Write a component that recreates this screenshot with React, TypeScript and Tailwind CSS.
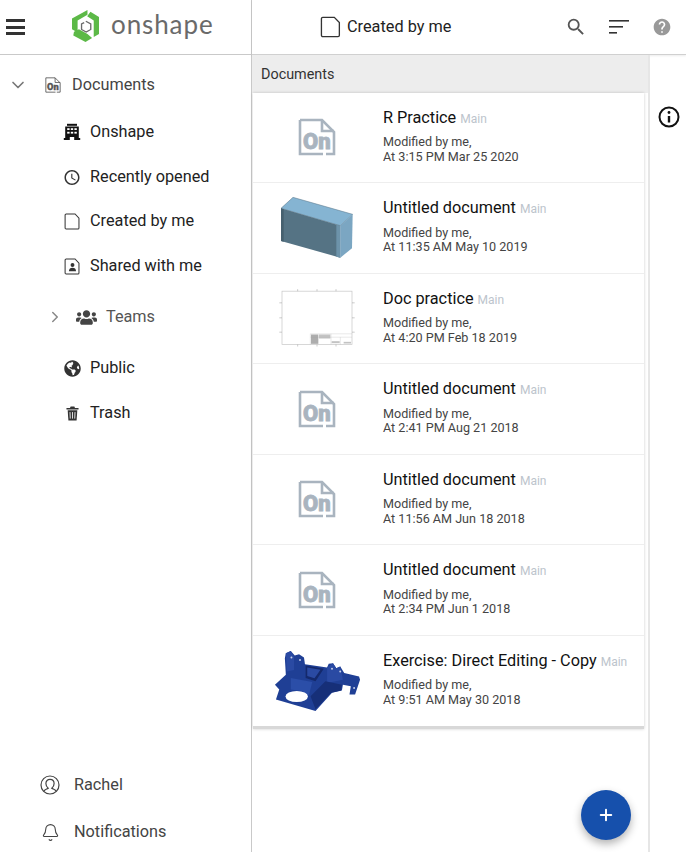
import React from 'react';
import { ChevronDown, ChevronRight, Bell, Plus } from 'lucide-react';
import { MdSearch, MdHelp, MdAccessTime } from 'react-icons/md';
import { FaUsers, FaGlobeAmericas } from 'react-icons/fa';

const PageIcon = ({ className }: { className: string }) => (
  <svg viewBox="0 0 20 20" className={className} fill="none" stroke="currentColor" strokeWidth="1.2">
    <path d="M2.5 1.2h10.5l4.6 4.8v11.6a1.2 1.2 0 0 1-1.2 1.2H2.5a1.2 1.2 0 0 1-1.2-1.2V2.4a1.2 1.2 0 0 1 1.2-1.2z" />
  </svg>
);

const SharedIcon = () => (
  <svg viewBox="0 0 20 20" className="w-[17px] h-[17px] text-[#333]" fill="none" stroke="currentColor" strokeWidth="1.2">
    <path d="M2.5 1.2h10.5l4.6 4.8v11.6a1.2 1.2 0 0 1-1.2 1.2H2.5a1.2 1.2 0 0 1-1.2-1.2V2.4a1.2 1.2 0 0 1 1.2-1.2z" />
    <circle cx="10" cy="8.3" r="2.3" fill="currentColor" stroke="none" />
    <path d="M5.8 15.6c0-2.6 1.8-4 4.2-4s4.2 1.4 4.2 4z" fill="currentColor" stroke="none" />
  </svg>
);

const BuildingIcon = () => (
  <svg viewBox="0 0 18 18" className="w-[18px] h-[18px] text-[#111]" fill="currentColor">
    <path d="M4 .8h10v2H4z" />
    <path d="M2.2 3.4h13.6V15h1.4v2h-6v-3H6.8v3h-6v-2h1.4z" />
    <g fill="#fff">
      <rect x="4.2" y="5.2" width="2.4" height="1.8" />
      <rect x="7.8" y="5.2" width="2.4" height="1.8" />
      <rect x="11.4" y="5.2" width="2.4" height="1.8" />
      <rect x="4.2" y="8.8" width="2.4" height="1.8" />
      <rect x="7.8" y="8.8" width="2.4" height="1.8" />
      <rect x="11.4" y="8.8" width="2.4" height="1.8" />
    </g>
  </svg>
);

const TrashIcon = () => (
  <svg viewBox="0 0 14 16" className="w-[13px] h-[15px] text-[#333]" fill="currentColor">
    <path d="M5 .5h4l.7 1.500H13.500v1.600H.5V2h3.800z" />
    <path d="M1.800 4.500h10.400l-.8 11H2.600z" />
    <path d="M4.300 6.500l.3 7M7 6.500v7M9.700 6.500l-.3 7" stroke="#fff" strokeWidth="0.900" fill="none" />
  </svg>
);

const UserCircleIcon = () => (
  <svg viewBox="0 0 20 20" className="w-5 h-5 text-[#444]" fill="none" stroke="currentColor" strokeWidth="1.2">
    <circle cx="10" cy="10" r="9" />
    <path d="M3.9 16.4c.4-1.9 2.9-2.2 4.3-3.2-1.5-1.1-2.3-2.6-2.3-4.600C5.900 6 7.600 4.300 10 4.300s4.100 1.700 4.100 4.300c0 2-.8 3.500-2.300 4.600 1.400 1 3.900 1.300 4.300 3.200" />
  </svg>
);

const OnDocIcon = ({ small }: { small?: boolean }) => (
  <svg viewBox="0 0 38 38" className={small ? 'w-[16px] h-[16px] text-[#555]' : 'w-[38px] h-[38px] text-[#a9b4bf]'} fill="none">
    <path d="M2 2h22l12 12v5M2 2v34h23" stroke="currentColor" strokeWidth={small ? 2 : 2.6} />
    <path d="M24 2v11h12" stroke="currentColor" strokeWidth={small ? 2 : 2.6} />
    <text x="5" y="31" fontFamily="Roboto, sans-serif" fontWeight="900" fontSize="22" fill="currentColor" stroke="currentColor" strokeWidth="0.8">On</text>
    <path d="M36 19v17h-8" stroke="currentColor" strokeWidth={small ? 2 : 2.6} />
  </svg>
);

// pinwheel hexagon, 3x units from the logo
const Logo = () => (
  <svg viewBox="36 28 82 97" className="w-[27px] h-[32px]">
    <g fill="#5cb947">
      <path d="M36 54l47-26v14L53 60v36l-17-10z" />
      <path d="M92 33l26 16v52l-16 9V60L82 47z" />
      <path d="M42 94l15-8 26 15 14 12-20 12-37-20z" />
    </g>
    <path d="M78 62l15 8v17l-14 8-14-8V70l8-4" fill="none" stroke="#6a6a6a" strokeWidth="4" />
  </svg>
);

// traced from the thumbnail, 3x units
const BlockThumb = () => (
  <svg viewBox="50 30 240 195" className="w-[80px] h-[65px]">
    <path d="M62 70L98 37l179 51-37 34z" fill="#85b4d2" stroke="#5b7486" strokeWidth="1.500" />
    <path d="M62 70l178 52v96L62 168z" fill="#557384" />
    <path d="M62 70l8 3v97l-8-2z" fill="#46606f" />
    <path d="M228 119l12 3v96l-12-3z" fill="#6d93aa" />
    <path d="M240 122l37-34-2 102-35 28z" fill="#7ba6c2" />
  </svg>
);

const DrawingThumb = () => (
  <svg viewBox="50 310 240 185" className="w-[80px] h-[62px]">
    <rect x="65" y="322" width="210" height="160" fill="#fff" stroke="#c4c4c4" strokeWidth="2" />
    <path d="M150 450h125M150 450v32M212 450v32M240 460v22M150 460h125" stroke="#bbb" strokeWidth="1" fill="none" />
    <rect x="152" y="452" width="22" height="28" fill="#999" opacity="0.800" />
    <rect x="176" y="452" width="34" height="12" fill="#aaa" opacity="0.700" />
    <rect x="214" y="472" width="24" height="6" fill="#aaa" opacity="0.700" />
    <rect x="250" y="474" width="22" height="5" fill="#aaa" opacity="0.700" />
    <path d="M112 316v6M170 316v6M227 316v6M112 482v6M170 482v6M227 482v6M57 357h8M57 445h8M275 357h8M275 445h8M57 402h8M275 402h8" stroke="#999" strokeWidth="1.500" />
  </svg>
);

const PartThumb = () => (
  <svg viewBox="40 55 262 188" className="w-[87px] h-[62px]">
    <path d="M75 65l15-7 12 14 13-4 15 10 3 20 67 10 5-11 13-2 10 15 12-5 12 20 45 10 3 10-15 45h-17l4-25-24-5-3 18-30 7-50 55-120-35 10-30-13-15 33-30-3-50z" fill="#1f3f95" />
    <path d="M135 102l55 10-25 38-30-10z" fill="#14296c" />
    <path d="M140 108l40 7-18 26-22-7z" fill="#2a4aa3" />
    <path d="M90 140l65 12-10 40-20-12-35-5z" fill="#2b4ea8" />
    <path d="M75 65l15-7 10 18v40l-22 4z" fill="#2a4aa3" />
    <path d="M200 108l18-13 10 15 12-5 8 40-48 10z" fill="#2a4aa3" />
    <path d="M150 195l45-45 50 10-3 18-30 7-47 50z" fill="#162f78" />
    <ellipse cx="108" cy="196" rx="34" ry="17" fill="#fff" />
    <circle cx="92" cy="78" r="3" fill="#c5cee6" />
    <circle cx="118" cy="85" r="3" fill="#c5cee6" />
    <circle cx="215" cy="112" r="3" fill="#c5cee6" />
    <circle cx="240" cy="120" r="3" fill="#c5cee6" />
    <circle cx="282" cy="170" r="3" fill="#c5cee6" />
  </svg>
);

const SortIcon = () => (
  <svg viewBox="0 0 20 14" className="w-5 h-[14px] text-[#333]" fill="currentColor">
    <rect x="0" y="0" width="20" height="1.600" />
    <rect x="0" y="6" width="14" height="1.600" />
    <rect x="0" y="12" width="8" height="1.600" />
  </svg>
);

const docs = [
  { title: 'R Practice', date: 'At 3:15 PM Mar 25 2020', thumb: <OnDocIcon /> },
  { title: 'Untitled document', date: 'At 11:35 AM May 10 2019', thumb: <BlockThumb /> },
  { title: 'Doc practice', date: 'At 4:20 PM Feb 18 2019', thumb: <DrawingThumb /> },
  { title: 'Untitled document', date: 'At 2:41 PM Aug 21 2018', thumb: <OnDocIcon /> },
  { title: 'Untitled document', date: 'At 11:56 AM Jun 18 2018', thumb: <OnDocIcon /> },
  { title: 'Untitled document', date: 'At 2:34 PM Jun 1 2018', thumb: <OnDocIcon /> },
  { title: 'Exercise: Direct Editing - Copy', date: 'At 9:51 AM May 30 2018', thumb: <PartThumb /> },
];

const navItems = [
  { label: 'Onshape', icon: <BuildingIcon />, h: 'h-[45px]' },
  { label: 'Recently opened', icon: <MdAccessTime className="w-[19px] h-[19px] text-[#333]" />, h: 'h-[45px]' },
  { label: 'Created by me', icon: <PageIcon className="w-[17px] h-[17px] text-[#333]" />, h: 'h-[44px]' },
  { label: 'Shared with me', icon: <SharedIcon />, h: 'h-[45px]' },
];

export default function App() {
  return (
    <div className="flex h-[852px] w-[686px] overflow-hidden bg-white font-['Roboto',sans-serif] text-[#222]">
      {/* Left nav */}
      <aside className="flex w-[252px] shrink-0 flex-col border-r border-[#c9c9c9]">
        <div className="flex h-[55px] shrink-0 items-center border-b border-[#c9c9c9]">
          <div className="ml-[6px] flex w-[19px] flex-col gap-[3.500px]">
            <span className="h-[3px] bg-[#333]" />
            <span className="h-[3px] bg-[#333]" />
            <span className="h-[3px] bg-[#333]" />
          </div>
          <div className="mb-[3px] ml-[47px] flex items-center gap-[12px]">
            <Logo />
            <span className="pb-[3px] font-['Lato',sans-serif] text-[26px] font-normal leading-[32px] tracking-[0.9px] text-[#6a6a6a]">onshape</span>
          </div>
        </div>

        <div className="flex h-[54.500px] items-center pt-[6px] pl-[8px]">
          <ChevronDown className="h-[20px] w-[20px] text-[#777]" strokeWidth={2} />
          <span className="ml-[17px]"><OnDocIcon small /></span>
          <span className="ml-[11px] text-[16.250px] text-[#444]">Documents</span>
        </div>

        <nav className="flex flex-col pl-[63px]">
          {navItems.map((item) => (
            <div key={item.label} className={`flex items-center ${item.h}`}>
              <span className="flex w-[18px] justify-center">{item.icon}</span>
              <span className="ml-[9px] text-[16.250px] text-[#222]">{item.label}</span>
            </div>
          ))}
        </nav>

        <div className="flex h-[57px] items-center pl-[46px]">
          <ChevronRight className="h-[18px] w-[18px] text-[#888]" strokeWidth={2} />
          <FaUsers className="ml-[12px] h-[21px] w-[21px] text-[#444]" />
          <span className="ml-[9px] text-[16.250px] text-[#555]">Teams</span>
        </div>

        <div className="flex flex-col pl-[63px]">
          <div className="flex h-[45px] items-center">
            <span className="flex w-[18px] justify-center"><FaGlobeAmericas className="h-[17px] w-[17px] text-[#333]" /></span>
            <span className="ml-[9px] text-[16.250px]">Public</span>
          </div>
          <div className="flex h-[45px] items-center">
            <span className="flex w-[18px] justify-center"><TrashIcon /></span>
            <span className="ml-[9px] text-[16.250px]">Trash</span>
          </div>
        </div>

        <div className="mt-auto flex flex-col gap-[3.500px] pl-[40px]">
          <div className="flex h-[47px] items-center">
            <UserCircleIcon />
            <span className="ml-[14px] text-[16.250px] text-[#444]">Rachel</span>
          </div>
          <div className="flex h-[40px] items-center">
            <Bell className="ml-[1px] h-[19px] w-[19px] text-[#444]" strokeWidth={1.4} />
            <span className="ml-[14px] text-[16.250px] text-[#444]">Notifications</span>
          </div>
        </div>
      </aside>

      {/* Main */}
      <div className="flex min-w-0 flex-1 flex-col">
        <header className="flex h-[55px] shrink-0 items-center border-b border-[#d0d0d0] shadow-[0_1px_2px_rgba(0,0,0,0.08)]">
          <PageIcon className="ml-[68px] h-[22px] w-[22px] text-[#333]" />
          <span className="ml-[5px] text-[16.300px] text-[#222]">Created by me</span>
          <MdSearch className="ml-[114px] h-[22px] w-[22px] text-[#555]" />
          <span className="ml-[22px]"><SortIcon /></span>
          <MdHelp className="ml-[23px] h-[20px] w-[20px] text-[#999]" />
        </header>

        <div className="flex min-h-0 flex-1">
          <main className="relative w-[398px] shrink-0 border-r-[2px] border-[#e6e6e6]">
            <div className="flex h-[37.500px] items-center bg-[#ededed] pt-[2px] pl-[9px] text-[14.400px] text-[#333]">Documents</div>
            <div className="ml-[1px] mr-[4px] border-b-[3px] border-[#d8d8d8] shadow-[0_0_3px_rgba(0,0,0,0.2)]">
              {docs.map((doc, i) => (
                <div key={i} className="flex h-[90.500px] items-start border-b border-[#eeeeee] last:border-b-0">
                  <div className="flex h-full w-[130px] shrink-0 items-center justify-center pr-[2px]">{doc.thumb}</div>
                  <div className="pt-[13px]">
                    <div className="flex items-baseline gap-[4px] whitespace-nowrap">
                      <span className="text-[16.250px] leading-[24px] text-[#111]">{doc.title}</span>
                      <span className="text-xs text-[#bcc4cc]">Main</span>
                    </div>
                    <div className="mt-[5.500px] text-[12.600px] leading-[14.500px] text-[#444]">
                      <div>Modified by me,</div>
                      <div>{doc.date}</div>
                    </div>
                  </div>
                </div>
              ))}
            </div>
            <button className="absolute right-[17px] bottom-[12px] flex h-[50px] w-[50px] items-center justify-center rounded-full bg-[#1650ac] shadow-[0_4px_8px_rgba(0,0,0,0.3)]">
              <Plus className="h-[18px] w-[18px] text-white" strokeWidth={2.6} />
            </button>
          </main>
          <div className="flex flex-1 justify-center pt-[51px] pl-[2px]">
            <svg viewBox="0 0 22 22" className="h-[22px] w-[22px]" fill="none" stroke="#111" strokeWidth="2">
              <circle cx="11" cy="11" r="9.500" />
              <path d="M11 10v6.500" strokeWidth="2.400" />
              <circle cx="11" cy="6.500" r="1.400" fill="#111" stroke="none" />
            </svg>
          </div>
        </div>
      </div>
    </div>
  );
}
